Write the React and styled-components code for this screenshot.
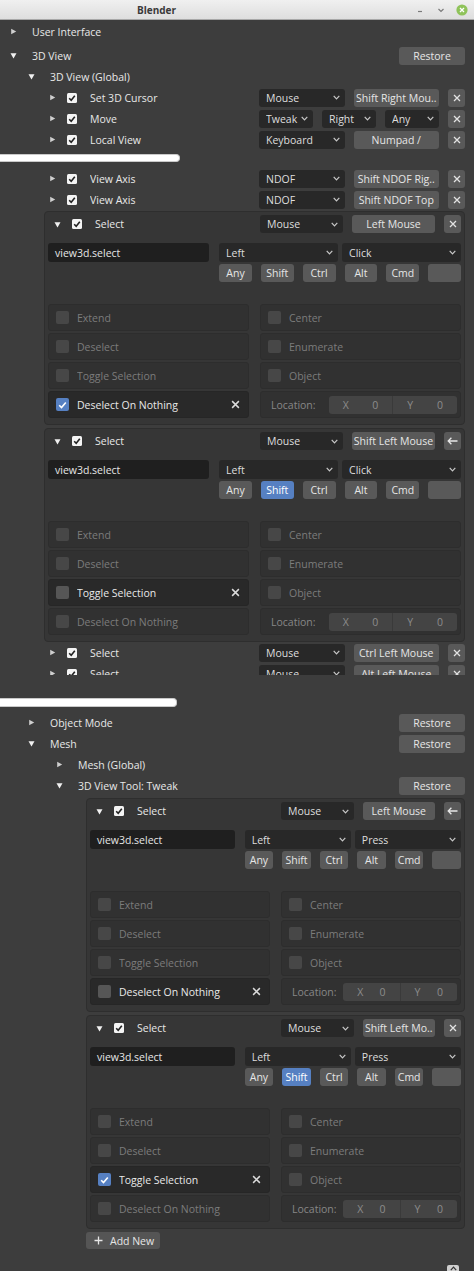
import React from "react"
import styled, { createGlobalStyle } from "styled-components"

const GlobalStyle = createGlobalStyle`
  * { box-sizing: border-box; }
  html, body {
    margin: 0;
    padding: 0;
    background: #3d3d3d;
  }
  body {
    font-family: "Open Sans", "Noto Sans", "DejaVu Sans", sans-serif;
    font-size: 10.5px;
    color: #e4e4e4;
  }
`

const Window = styled.div`
  position: relative;
  width: 474px;
  height: 1271px;
  overflow: hidden;
  background: #3d3d3d;
`

const TitleBar = styled.div`
  height: 20px;
  display: flex;
  align-items: center;
  padding-right: 6px;
  background: linear-gradient(#f0f0f0, #dedede);
  border-bottom: 1px solid #a8a8a8;
`

const Title = styled.div`
  margin-left: 137px;
  font-size: 10px;
  font-weight: 700;
  color: #3a3a3a;
`

const WindowButtons = styled.div`
  margin-left: auto;
  display: flex;
  align-items: center;
  gap: 9px;
`

const Content = styled.div`
  padding-top: 1px;
`

const Row = styled.div`
  display: flex;
  align-items: center;
  height: 21px;
  padding-left: ${(p) => p.$indent}px;
  padding-right: 9px;
  margin-top: ${(p) => p.$gap || 0}px;
`

const Name = styled.span`
  flex: 1;
  min-width: 0;
  margin-left: ${(p) => p.$offset}px;
  white-space: nowrap;
  overflow: hidden;
  color: #e8e8e8;
`

const Clip = styled.div`
  height: 12px;
  overflow: hidden;
`

const Redaction = styled.div`
  width: ${(p) => p.$width}px;
  height: ${(p) => p.$height}px;
  margin: ${(p) => p.$top}px 0 ${(p) => p.$bottom}px;
  background: #ffffff;
  border: 1px solid #c9c9c9;
  border-left: none;
  border-radius: 0 4px 4px 0;
`

const Controls = styled.div`
  flex: 0 0 ${(p) => p.$width || "206px"};
  display: flex;
  align-items: center;
  gap: 9px;
`

const Dropdown = styled.div`
  flex: 1 1 0;
  min-width: 0;
  height: 18px;
  display: flex;
  align-items: center;
  padding: 0;
  background: #282828;
  border-radius: 3px;
  color: #dedede;

  span {
    flex: 1;
    min-width: 0;
    margin-left: 7px;
    white-space: nowrap;
    overflow: hidden;
  }

  svg {
    flex: 0 0 7px;
    margin: 0 5px 0 3px;
  }
`

const Button = styled.div`
  flex: ${(p) => (p.$fixed ? `0 0 ${p.$fixed}px` : "1 1 0")};
  min-width: 0;
  height: 18px;
  display: flex;
  align-items: center;
  justify-content: center;
  padding: 0;
  background: ${(p) => (p.$active ? "#5680c2" : "#595959")};
  border-radius: 3px;
  color: ${(p) => (p.$active ? "#ffffff" : "#e6e6e6")};
  white-space: nowrap;
  overflow: hidden;
`

const Restore = styled(Button)`
  flex: 0 0 66px;
  margin-left: auto;
`

const Panel = styled.div`
  margin: ${(p) => p.$top}px 9px 0 ${(p) => p.$left}px;
  padding: 1px 3px 6px;
  background: #363636;
  border: 1px solid #2e2e2e;
  border-radius: 4px;
`

const PanelHeader = styled.div`
  height: 22px;
  display: grid;
  grid-template-columns: 1fr 1fr;
  column-gap: 11px;
  align-items: center;
`

const HeaderLabel = styled.div`
  display: flex;
  align-items: center;
  padding-left: 6px;
`

const FieldRow = styled.div`
  display: flex;
  height: 19px;
  margin-top: 8px;
`

const NameField = styled.div`
  flex: 0 0 39%;
  margin-right: 10px;
  display: flex;
  align-items: center;
  padding-left: 7px;
  background: #1f1f1f;
  border-radius: 3px;
  color: #e6e6e6;
`

const EventPair = styled.div`
  flex: 1;
  display: flex;
  gap: 4px;

  ${Dropdown} {
    height: 19px;
  }
`

const ModRow = styled.div`
  display: flex;
  gap: 9px;
  margin-top: 2px;
  padding-left: calc(39% + 10px);
`

const OptionGrid = styled.div`
  display: grid;
  grid-template-columns: 1fr 1fr;
  gap: 2px 11px;
  margin-top: 22px;
`

const Option = styled.div`
  height: 27px;
  display: flex;
  align-items: center;
  padding: 0 8px 0 7px;
  background: ${(p) => (p.$active ? "#292929" : "#313131")};
  border: 1px solid ${(p) => (p.$active ? "#262626" : "#2d2d2d")};
  border-radius: 3px;
  color: ${(p) => (p.$active ? "#e8e8e8" : "#7c7c7c")};
`

const Tick = styled.span`
  flex: 0 0 13px;
  height: 13px;
  margin-right: 8px;
  display: flex;
  align-items: center;
  justify-content: center;
  border-radius: 2px;
  background: ${(p) => (p.$checked ? "#5680c2" : p.$active ? "#565656" : "#474747")};
`

const OptionText = styled.span`
  flex: 1;
  white-space: nowrap;
  overflow: hidden;
`

const LocationRow = styled(Option)`
  padding: 0 3px 0 10px;
`

const LocationLabel = styled.span`
  flex: 0 0 31%;
  color: #878787;
`

const Vector = styled.div`
  flex: 1;
  height: 18px;
  display: flex;
  background: #444444;
  border-radius: 3px;
  color: #8c8c8c;
`

const VectorHalf = styled.div`
  flex: 1;
  display: flex;
  align-items: center;
  justify-content: space-between;
  padding: 0 14px;

  & + & {
    border-left: 1px solid #3a3a3a;
  }
`

const AddNew = styled.div`
  width: 74px;
  height: 17px;
  margin: 3px 0 0 86px;
  display: flex;
  align-items: center;
  gap: 7px;
  padding-left: 8px;
  background: #555555;
  border-radius: 3px;
  color: #e6e6e6;
`

const ScrollHint = styled.div`
  position: absolute;
  right: 15px;
  bottom: -4px;
  width: 12px;
  height: 10px;
  display: flex;
  justify-content: center;
  padding-top: 1px;
  background: #cfcfcf;
  border-radius: 2px;
`

const Caret = ({ open }) => (
  <svg width="7" height="7" viewBox="0 0 7 7" style={{ flex: "0 0 7px" }}>
    {open ? (
      <polygon points="0.5,1.2 6.5,1.2 3.5,6.4" fill="#f0f0f0" />
    ) : (
      <polygon points="1.2,0.8 6.2,3.5 1.2,6.2" fill="#cfcfcf" />
    )}
  </svg>
)

const Enabled = () => (
  <svg width="10" height="10" viewBox="0 0 10 10" style={{ flex: "0 0 10px", marginLeft: 11 }}>
    <rect x="0" y="0" width="10" height="10" rx="1.5" fill="#f4f4f4" />
    <polyline points="2.2,5.2 4.2,7.2 7.8,2.8" fill="none" stroke="#222" strokeWidth="1.6" />
  </svg>
)

const Chevron = () => (
  <svg width="7" height="5" viewBox="0 0 7 5">
    <polyline points="0.7,0.8 3.5,3.8 6.3,0.8" fill="none" stroke="#c8c8c8" strokeWidth="1.2" />
  </svg>
)

const Cross = ({ size = 8, color = "#e2e2e2" }) => (
  <svg width={size} height={size} viewBox="0 0 8 8">
    <path d="M1 1 L7 7 M7 1 L1 7" stroke={color} strokeWidth="1.3" />
  </svg>
)

const Back = () => (
  <svg width="11" height="8" viewBox="0 0 11 8">
    <path d="M10.5 4 H1.2 M4.4 0.8 L1.2 4 L4.4 7.2" fill="none" stroke="#e6e6e6" strokeWidth="1.3" />
  </svg>
)

const Plus = () => (
  <svg width="9" height="9" viewBox="0 0 9 9">
    <path d="M4.5 0.5 V8.5 M0.5 4.5 H8.5" stroke="#e6e6e6" strokeWidth="1.3" />
  </svg>
)

const Check = () => (
  <svg width="9" height="8" viewBox="0 0 9 8">
    <polyline points="1.2,4.2 3.5,6.5 7.8,1.4" fill="none" stroke="#ffffff" strokeWidth="1.6" />
  </svg>
)

const Select = ({ value }) => (
  <Dropdown>
    <span>{value}</span>
    <Chevron />
  </Dropdown>
)

const TreeRow = ({ indent, open, label, gap, children }) => (
  <Row $indent={indent} $gap={gap}>
    <Caret open={open} />
    <Name $offset={15}>{label}</Name>
    {children}
  </Row>
)

const ItemRow = ({ label, type, button, events }) => (
  <Row $indent={49}>
    <Caret />
    <Enabled />
    <Name $offset={13}>{label}</Name>
    <Controls>
      <Select value={type} />
      {events
        ? events.map((e) => <Select key={e} value={e} />)
        : <Button>{button}</Button>}
      <Button $fixed={17}>
        <Cross />
      </Button>
    </Controls>
  </Row>
)

const OptionCell = ({ label, state }) => {
  const active = state !== "off"
  return (
    <Option $active={active}>
      <Tick $active={active} $checked={state === "checked"}>
        {state === "checked" && <Check />}
      </Tick>
      <OptionText>{label}</OptionText>
      {active && <Cross size={9} color="#dcdcdc" />}
    </Option>
  )
}

const mods = ["Any", "Shift", "Ctrl", "Alt", "Cmd", ""]

const KeyPanel = ({ left, top, button, back, event, shift, states }) => (
  <Panel $left={left} $top={top}>
    <PanelHeader>
      <HeaderLabel>
        <Caret open />
        <Enabled />
        <Name $offset={13}>Select</Name>
      </HeaderLabel>
      <Controls $width="auto">
        <Select value="Mouse" />
        <Button>{button}</Button>
        <Button $fixed={17}>{back ? <Back /> : <Cross />}</Button>
      </Controls>
    </PanelHeader>
    <FieldRow>
      <NameField>view3d.select</NameField>
      <EventPair>
        <Select value="Left" />
        <Select value={event} />
      </EventPair>
    </FieldRow>
    <ModRow>
      {mods.map((m, i) => (
        <Button key={i} $active={shift && m === "Shift"}>
          {m}
        </Button>
      ))}
    </ModRow>
    <OptionGrid>
      <OptionCell label="Extend" state="off" />
      <OptionCell label="Center" state="off" />
      <OptionCell label="Deselect" state="off" />
      <OptionCell label="Enumerate" state="off" />
      <OptionCell label="Toggle Selection" state={states.toggle} />
      <OptionCell label="Object" state="off" />
      <OptionCell label="Deselect On Nothing" state={states.nothing} />
      <LocationRow>
        <LocationLabel>Location:</LocationLabel>
        <Vector>
          <VectorHalf>
            <span>X</span>
            <span>0</span>
          </VectorHalf>
          <VectorHalf>
            <span>Y</span>
            <span>0</span>
          </VectorHalf>
        </Vector>
      </LocationRow>
    </OptionGrid>
  </Panel>
)

const App = () => {
  return (
    <Window>
      <GlobalStyle />
      <TitleBar>
        <Title>Blender</Title>
        <WindowButtons>
          <svg width="12" height="12" viewBox="0 0 12 12">
            <path d="M4 7.5 H8" stroke="#7a7a7a" strokeWidth="1.2" />
          </svg>
          <svg width="12" height="12" viewBox="0 0 12 12">
            <polyline points="3.5,5 6,7.5 8.5,5" fill="none" stroke="#7a7a7a" strokeWidth="1.2" />
          </svg>
          <svg width="12" height="12" viewBox="0 0 12 12">
            <circle cx="6" cy="6" r="5.6" fill="#8fc35a" />
            <path d="M4 4 L8 8 M8 4 L4 8" stroke="#ffffff" strokeWidth="1.3" />
          </svg>
        </WindowButtons>
      </TitleBar>

      <Content>
        <TreeRow indent={10} label="User Interface" />
        <TreeRow indent={10} open label="3D View" gap={3}>
          <Restore>Restore</Restore>
        </TreeRow>
        <TreeRow indent={28} open label="3D View (Global)" />
        <ItemRow label="Set 3D Cursor" type="Mouse" button="Shift Right Mou.." />
        <ItemRow label="Move" type="Tweak" events={["Right", "Any"]} />
        <ItemRow label="Local View" type="Keyboard" button="Numpad /" />

        <Redaction $width={180} $height={8} $top={4} $bottom={6} />

        <ItemRow label="View Axis" type="NDOF" button="Shift NDOF Rig.." />
        <ItemRow label="View Axis" type="NDOF" button="Shift NDOF Top" />

        <KeyPanel
          left={44}
          top={1}
          button="Left Mouse"
          event="Click"
          states={{ toggle: "off", nothing: "checked" }}
        />
        <KeyPanel
          left={44}
          top={3}
          button="Shift Left Mouse"
          back
          shift
          event="Click"
          states={{ toggle: "active", nothing: "off" }}
        />

        <ItemRow label="Select" type="Mouse" button="Ctrl Left Mouse" />
        <Clip>
          <ItemRow label="Select" type="Mouse" button="Alt Left Mouse" />
        </Clip>

        <Redaction $width={177} $height={9} $top={23} $bottom={5} />

        <TreeRow indent={28} label="Object Mode">
          <Restore>Restore</Restore>
        </TreeRow>
        <TreeRow indent={28} open label="Mesh">
          <Restore>Restore</Restore>
        </TreeRow>
        <TreeRow indent={56} label="Mesh (Global)" />
        <TreeRow indent={56} open label="3D View Tool: Tweak">
          <Restore>Restore</Restore>
        </TreeRow>

        <KeyPanel
          left={86}
          top={2}
          button="Left Mouse"
          back
          event="Press"
          states={{ toggle: "off", nothing: "active" }}
        />
        <KeyPanel
          left={86}
          top={3}
          button="Shift Left Mo.."
          shift
          event="Press"
          states={{ toggle: "checked", nothing: "off" }}
        />

        <AddNew>
          <Plus />
          <span>Add New</span>
        </AddNew>
      </Content>

      <ScrollHint>
        <svg width="7" height="5" viewBox="0 0 7 5">
          <polyline points="0.8,4.2 3.5,1.2 6.2,4.2" fill="none" stroke="#333" strokeWidth="1.2" />
        </svg>
      </ScrollHint>
    </Window>
  )
}

export default App
